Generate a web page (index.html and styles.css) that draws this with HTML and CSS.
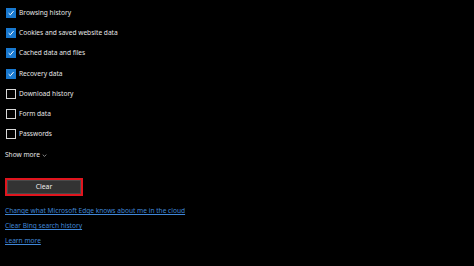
FILE: index.html
```html
<!DOCTYPE html>
<html>
<head>
<meta charset="utf-8">
<link rel="stylesheet" href="styles.css">
</head>
<body>
<div class="panel">
  <ul class="options">
    <li class="opt"><span class="box checked"><svg viewBox="0 0 10 10"><path d="M2 5.2 L4.2 7.3 L8.2 2.6" /></svg></span>Browsing history</li>
    <li class="opt"><span class="box checked"><svg viewBox="0 0 10 10"><path d="M2 5.2 L4.2 7.3 L8.2 2.6" /></svg></span>Cookies and saved website data</li>
    <li class="opt"><span class="box checked"><svg viewBox="0 0 10 10"><path d="M2 5.2 L4.2 7.3 L8.2 2.6" /></svg></span>Cached data and files</li>
    <li class="opt"><span class="box checked"><svg viewBox="0 0 10 10"><path d="M2 5.2 L4.2 7.3 L8.2 2.6" /></svg></span>Recovery data</li>
    <li class="opt"><span class="box"></span>Download history</li>
    <li class="opt"><span class="box"></span>Form data</li>
    <li class="opt"><span class="box"></span>Passwords</li>
  </ul>
  <div class="more">Show more <svg class="chev" viewBox="0 0 8 5"><path d="M1 1 L4 4 L7 1"/></svg></div>
  <div class="btnwrap"><button class="clear">Clear</button></div>
  <div class="links">
    <a href="#">Change what Microsoft Edge knows about me in the cloud</a>
    <a href="#">Clear Bing search history</a>
    <a href="#">Learn more</a>
  </div>
</div>
</body>
</html>
```
FILE: styles.css
```css
html, body {
  margin: 0;
  padding: 0;
  background: #000;
}
body {
  width: 474px;
  height: 266px;
  overflow: hidden;
  font-family: "Noto Sans", "Open Sans", sans-serif;
  font-size: 6.6px;
  color: #e6e6e6;
}
.panel {
  padding: 8px 0 0 6px;
}
.options {
  list-style: none;
  margin: 0;
  padding: 0;
  display: flex;
  flex-direction: column;
  gap: 10.2px;
}
.opt {
  display: flex;
  align-items: center;
  height: 10px;
  line-height: 10px;
  gap: 3px;
  white-space: nowrap;
}
.box {
  width: 8px;
  height: 8px;
  border: 1px solid #d8d8d8;
  display: inline-flex;
  flex: none;
}
.box.checked {
  background: #1979d0;
  border-color: #1979d0;
}
.box svg {
  width: 8px;
  height: 8px;
}
.box svg path {
  fill: none;
  stroke: #fff;
  stroke-width: 1.2;
}
.more {
  margin: 11px 0 0 -1px;
  height: 10px;
  line-height: 10px;
  display: flex;
  align-items: center;
  gap: 2px;
}
.chev {
  width: 5px;
  height: 3px;
}
.chev path {
  fill: none;
  stroke: #ddd;
  stroke-width: 1;
}
.btnwrap {
  margin: 18px 0 0 -1px;
  width: 74px;
  height: 14px;
  border: 2px solid #e0151e;
  padding: 0;
}
.clear {
  display: block;
  width: 74px;
  height: 14px;
  margin: 0;
  border: 1px solid #4a4a4a;
  background: #333;
  color: #f0f0f0;
  font-family: inherit;
  font-size: 6.8px;
  padding: 0;
  line-height: 12px;
}
.links {
  margin: 10px 0 0 -1px;
  display: flex;
  flex-direction: column;
  gap: 5px;
}
.links a {
  color: #3f86d6;
  text-decoration: underline;
  line-height: 10px;
  height: 10px;
  white-space: nowrap;
}
```
